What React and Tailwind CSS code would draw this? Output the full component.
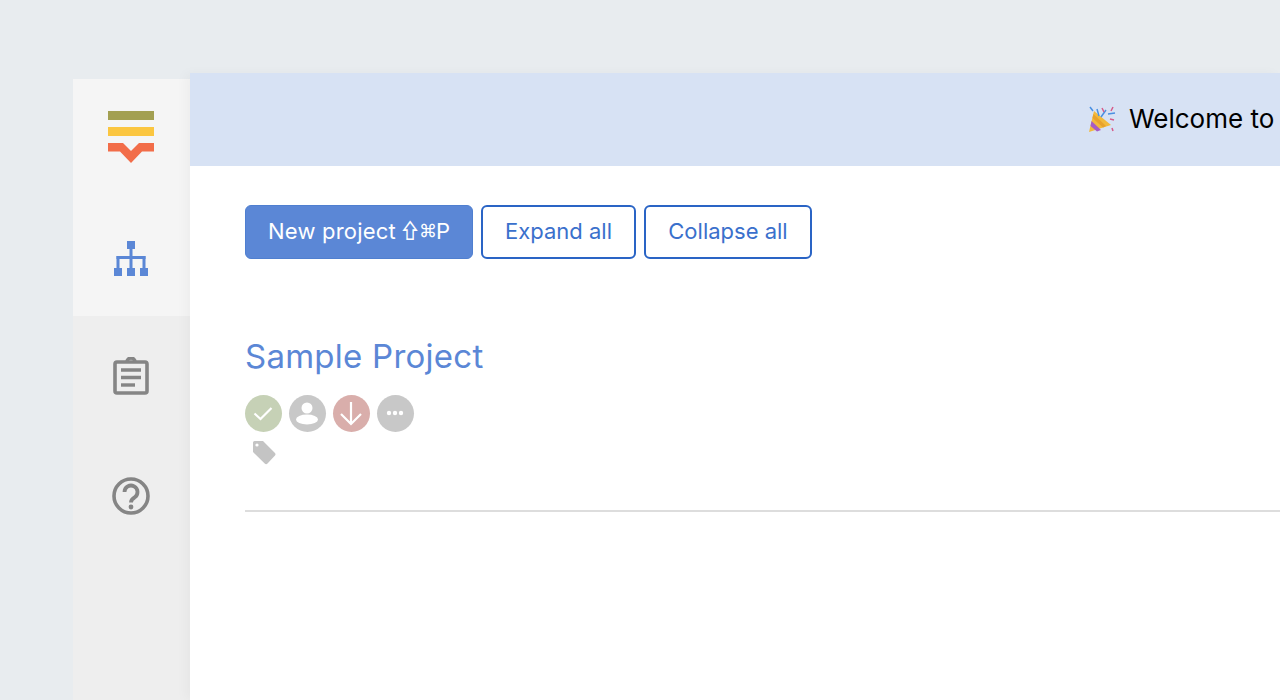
import React from "react";

const font = { fontFamily: "Inter, 'Noto Sans', sans-serif" };

const Logo = () => (
  <svg width="46" height="52" viewBox="0 0 46 52">
    <rect x="0" y="0" width="46" height="9" fill="#a3a052" />
    <rect x="0" y="16" width="46" height="9" fill="#fbc640" />
    <path d="M0 32h15l8 8 8-8h15v8.500H34L23 52 12 40.500H0z" fill="#f26d49" />
  </svg>
);

const TreeIcon = () => (
  <svg width="36" height="36" viewBox="0 0 36 36" fill="#5b87d6">
    <rect x="14" y="0" width="8" height="8" />
    <rect x="16.500" y="8" width="3" height="20" />
    <rect x="3.500" y="15" width="29" height="3" />
    <rect x="3.500" y="15" width="3" height="14" />
    <rect x="29.500" y="15" width="3" height="14" />
    <rect x="1" y="27" width="8" height="8" />
    <rect x="14" y="27" width="8" height="8" />
    <rect x="27" y="27" width="8" height="8" />
  </svg>
);

const ClipboardIcon = () => (
  <svg width="36" height="38" viewBox="0 0 36 38" fill="none" stroke="#858585">
    <path d="M4 5h28a2 2 0 0 1 2 2v27a2 2 0 0 1-2 2H4a2 2 0 0 1-2-2V7a2 2 0 0 1 2-2z" strokeWidth="3.600" />
    <path d="M14 5a4 4 0 0 1 8 0" strokeWidth="3.600" />
    <path d="M8 13h20M8 20.500h20" strokeWidth="3.400" />
    <path d="M8 28h14" strokeWidth="3.400" />
  </svg>
);

const HelpIcon = () => (
  <svg width="38" height="38" viewBox="0 0 38 38" fill="none" stroke="#858585">
    <circle cx="19" cy="19" r="17" strokeWidth="3.600" />
    <path d="M12.500 15a6.500 6.500 0 1 1 10 5.500c-2.500 1.500-3.500 2.500-3.500 5" strokeWidth="3.800" />
    <circle cx="19" cy="30" r="2.400" fill="#858585" stroke="none" />
  </svg>
);

const Party = () => (
  <svg width="28" height="28" viewBox="0 0 28 28">
    <path d="M1 26 6 5l17 14z" fill="#f2b93b" />
    <path d="M3.500 15 13 24l-4 1.500-6.500-5.500z" fill="#a65cc4" />
    <path d="M5.500 8 18 20l-3 1.500L4.500 12z" fill="#e8a22b" />
    <path d="M9 3l2 7M2 1l3 4M20 8l7-1M13 11l5-7" stroke="#4a90e2" strokeWidth="1.500" fill="none" />
    <path d="M14 2l2 4M25 1l-2 4M22 13l4 1M24 22l1 3" stroke="#d65c8a" strokeWidth="1.500" fill="none" />
  </svg>
);

const Circle = ({ bg, children }) => (
  <div className={`w-[36.500px] h-[36.500px] rounded-full flex items-center justify-center ${bg}`}>
    {children}
  </div>
);

const App = () => {
  return (
    <div className="h-[700px] w-[1280px] overflow-hidden bg-[#e8ecef] flex pl-[73px] pt-[73px]" style={font}>
      <aside className="w-[117px] mt-[6px] flex flex-col shrink-0 bg-[#eeeeee] pr-[1px]">
        <div className="h-[237px] bg-[#f5f5f5] flex flex-col items-center mr-[-1px] pr-[1px]">
          <div className="mt-[32px] h-[52px]"><Logo /></div>
          <div className="mt-[78px]"><TreeIcon /></div>
        </div>
        <div className="flex flex-col items-center">
          <div className="mt-[41px] h-[38px]"><ClipboardIcon /></div>
          <div className="mt-[82px]"><HelpIcon /></div>
        </div>
      </aside>

      <main className="flex-1 min-w-0 bg-white flex flex-col shadow-[-5px_0_10px_rgba(0,0,0,0.03)] z-10">
        <div className="h-[93px] bg-[#d7e2f4] flex items-center pl-[898px] gap-[13px] whitespace-nowrap overflow-hidden">
          <Party />
          <span className="text-[26px] text-black mb-[2px]">Welcome to</span>
        </div>

        <div className="pl-[55px]">
          <div className="flex gap-[8px] mt-[39px] text-[22px]">
            <button className="h-[54px] w-[228px] rounded-[6px] bg-[#5b87d6] border border-[#4f7fd0] text-white pb-[2px] flex items-center justify-center">
              <span className="tracking-[0.2px]">New project</span>
              <span className="ml-[6px] w-[16px] flex justify-center text-[25px] leading-none scale-x-[0.72]">⇧</span>
              <span className="ml-[2px] w-[16px] flex justify-center text-[18px] leading-none">⌘</span>
              <span>P</span>
            </button>
            <button className="h-[54px] w-[155px] rounded-[6px] border-2 border-[#2a64c5] text-[#3a70cc] pb-[2px]">Expand all</button>
            <button className="h-[54px] w-[168px] rounded-[6px] border-2 border-[#2a64c5] text-[#3a70cc] pb-[2px]">Collapse all</button>
          </div>

          <h2 className="mt-[75px] text-[33px] leading-[44px] text-[#5b87d6] tracking-[0.25px]">Sample Project</h2>

          <div className="flex gap-[7.500px] mt-[17px]">
            <Circle bg="bg-[#c6d1b6]">
              <svg width="20" height="20" viewBox="0 0 20 20" fill="none" stroke="white" strokeWidth="2.200"><path d="M1.500 10.500l6 5.500L18.500 5" /></svg>
            </Circle>
            <Circle bg="bg-[#c8c8c8]">
              <svg width="24" height="24" viewBox="0 0 24 24" fill="white"><circle cx="12" cy="7" r="5.500" /><ellipse cx="12" cy="18.500" rx="11" ry="5" /></svg>
            </Circle>
            <Circle bg="bg-[#d9aeab]">
              <svg width="24" height="26" viewBox="0 0 24 26" fill="none" stroke="white" strokeWidth="2.200"><path d="M12 2v22M2 14l10 10 10-10" /></svg>
            </Circle>
            <Circle bg="bg-[#c8c8c8]">
              <svg width="18" height="6" viewBox="0 0 18 6" fill="white"><circle cx="3" cy="3" r="2.200" /><circle cx="9" cy="3" r="2.200" /><circle cx="15" cy="3" r="2.200" /></svg>
            </Circle>
          </div>

          <div className="mt-[8px] ml-[7px] h-[26px]">
            <svg width="24" height="26" viewBox="0 0 24 26"><path d="M1 2.500A1.500 1.500 0 0 1 2.500 1H11l12 12a2 2 0 0 1 0 2.500l-7.500 8a2 2 0 0 1-2.800 0L1 12z" fill="#c4c4c4" /><circle cx="5" cy="5" r="1.600" fill="white" /></svg>
          </div>

          <div className="mt-[44px] border-t-2 border-[#dddddd]" />
        </div>
      </main>
    </div>
  );
};

export default App;
